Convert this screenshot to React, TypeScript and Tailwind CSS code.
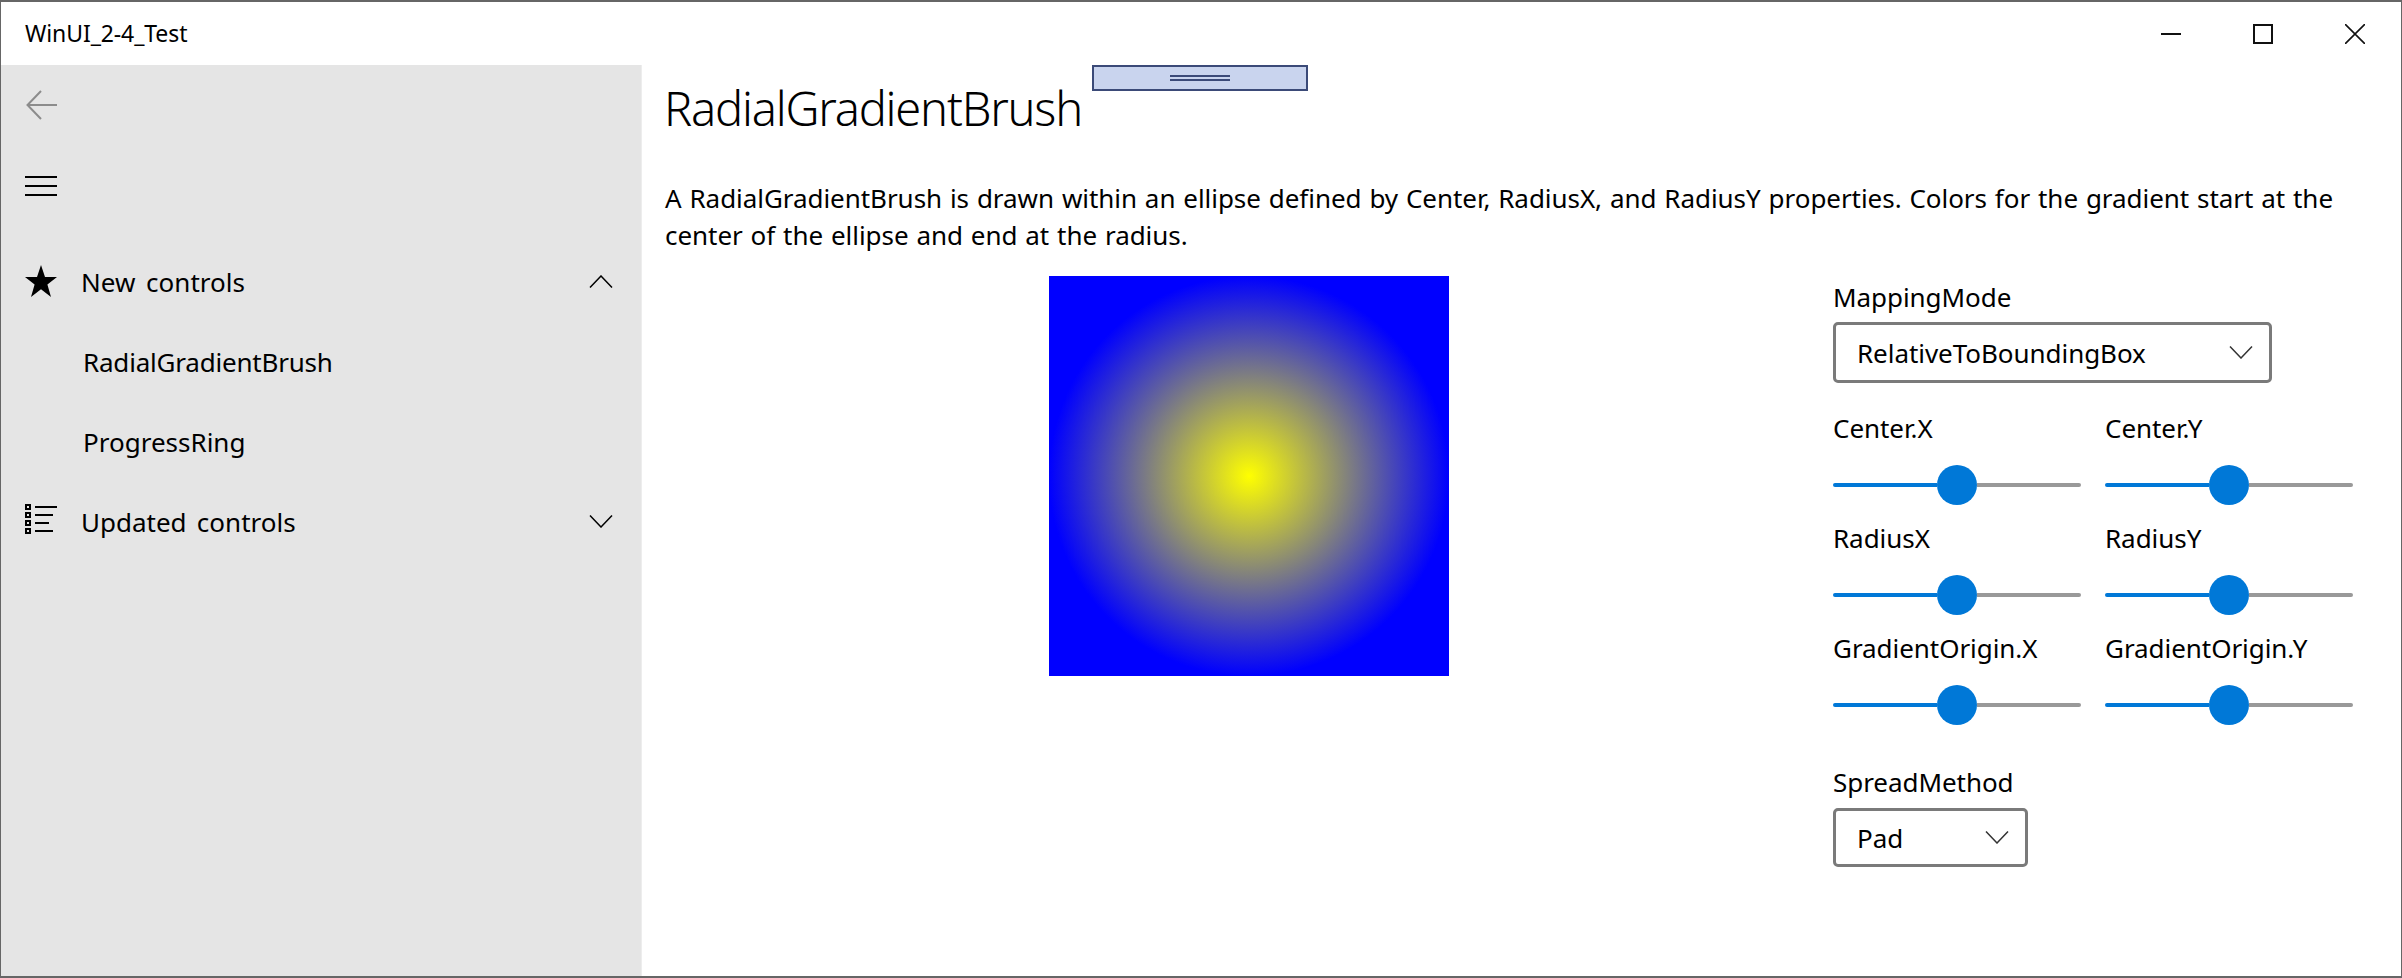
const font = "font-['Noto_Sans',sans-serif]";

function Chevron({ up = false, className = "" }: { up?: boolean; className?: string }) {
  return (
    <svg width="24" height="13" viewBox="0 0 24 13" fill="none" stroke="currentColor" strokeWidth="1.5" className={className}>
      <path d={up ? "M1 12.5 L12 1 L23 12.5" : "M1 .5 L12 12 L23 .5"} />
    </svg>
  );
}

function ComboBox({ value, className }: { value: string; className: string }) {
  return (
    <div className={`flex items-center justify-between rounded-[5px] border-[3px] border-[#7a7a7a] bg-white pl-[21px] pr-[16px] ${className}`}>
      <span className="text-[26px] leading-[36px] tracking-[-0.05px] text-black">{value}</span>
      <Chevron className="text-[#333333]" />
    </div>
  );
}

function SliderField({ label }: { label: string }) {
  return (
    <div className="flex w-[248px] flex-col">
      <div className="whitespace-nowrap text-[26px] leading-[36px] tracking-[-0.05px] text-black">{label}</div>
      <div className="mt-[19px] flex h-[40px] items-center">
        <div className="h-[4px] w-[104px] rounded-l-full bg-[#0078d7]" />
        <div className="h-[40px] w-[40px] rounded-full bg-[#0078d7]" />
        <div className="h-[4px] flex-1 rounded-r-full bg-[#999999]" />
      </div>
    </div>
  );
}

function NavRow({ icon, label, chevron, textClass }: { icon?: React.ReactNode; label: string; chevron?: React.ReactNode; textClass: string }) {
  return (
    <div className="flex h-[80px] items-center pl-[24px] pr-[28px]">
      <div className="flex w-[32px] shrink-0 justify-center">{icon}</div>
      <span className={`flex-1 pt-[2px] text-[26px] text-black ${textClass}`}>{label}</span>
      {chevron}
    </div>
  );
}

export default function App() {
  return (
    <div className={`relative flex h-[978px] w-[2402px] flex-col overflow-hidden border-x border-y-2 border-[#666666] bg-white ${font}`}>
      {/* title bar */}
      <div className="flex h-[63px] shrink-0 items-center pl-[24px]">
        <span className="flex-1 text-[23px] tracking-[-0.1px] text-black">WinUI_2-4_Test</span>
        <div className="flex items-center gap-[72px] pr-[36px]">
          <div className="h-[2px] w-[20px] bg-[#111111]" />
          <div className="h-[20px] w-[20px] border-2 border-[#111111]" />
          <svg width="20" height="20" viewBox="0 0 20 20" stroke="#111111" strokeWidth="1.6">
            <path d="M0 0 L20 20 M20 0 L0 20" />
          </svg>
        </div>
      </div>

      <div className="flex min-h-0 flex-1">
        {/* sidebar */}
        <div className="flex w-[641px] shrink-0 flex-col border-r border-[#ededed] bg-[#e5e5e5]">
          <div className="flex h-[80px] items-center pl-[25px]">
            <svg width="32" height="30" viewBox="0 0 32 30" fill="none" stroke="#8c8c8c" strokeWidth="2">
              <path d="M31 15 H2 M15 1 L1.5 15 L15 29" />
            </svg>
          </div>
          <div className="flex h-[82px] items-center pl-[24px]">
            <svg width="32" height="20" viewBox="0 0 32 20" fill="#000000">
              <rect y="0" width="32" height="2" />
              <rect y="9" width="32" height="2" />
              <rect y="18" width="32" height="2" />
            </svg>
          </div>
          <div className="mt-[14px] flex flex-col">
            <NavRow
              label="New controls"
              textClass="ml-[24px] tracking-[0px] [word-spacing:4px]"
              icon={
                <svg width="32" height="32" viewBox="0 0 32 32" fill="#000000">
                  <polygon points="16,0 20,12 32,12 22.4,19.5 26,32 16,24.2 6,32 9.6,19.5 0,12 12,12" />
                </svg>
              }
              chevron={<Chevron up className="text-black" />}
            />
            <NavRow label="RadialGradientBrush" textClass="ml-[26px] tracking-[-0.2px]" />
            <NavRow label="ProgressRing" textClass="ml-[26px] tracking-[0px]" />
            <NavRow
              label="Updated controls"
              textClass="ml-[24px] tracking-[0px] [word-spacing:3.5px]"
              icon={
                <svg width="32" height="30" viewBox="0 0 32 30" fill="none" stroke="#000000" strokeWidth="2" className="mb-[4px]">
                  <rect x="1" y="1" width="4" height="4" />
                  <rect x="1" y="9" width="4" height="4" />
                  <rect x="1" y="17" width="4" height="4" />
                  <rect x="1" y="25" width="4" height="4" />
                  <path d="M10 3 H32 M10 11 H28 M10 19 H24 M10 27 H28" />
                </svg>
              }
              chevron={<Chevron className="text-black" />}
            />
          </div>
        </div>

        {/* page content */}
        <div className="flex min-w-0 flex-1 flex-col">
          <h1 className="mt-[11px] pl-[22px] text-[47px] font-light leading-[64px] tracking-[-1.2px] text-black">RadialGradientBrush</h1>
          <p className="mt-[40px] pl-[23px] text-[26px] leading-[37px] tracking-[-0.05px] text-black [word-spacing:1.2px]">
            A RadialGradientBrush is drawn within an ellipse defined by Center, RadiusX, and RadiusY properties. Colors for the gradient start at the
            <br />
            center of the ellipse and end at the radius.
          </p>
          <div className="mt-[22px] flex">
            <div className="ml-[407px] h-[400px] w-[400px] shrink-0 bg-[radial-gradient(circle_closest-side,#ffff00,#0000ff)]" />
            <div className="ml-[384px] flex flex-col pt-[3px]">
              <div className="text-[26px] leading-[36px] tracking-[-0.05px] text-black">MappingMode</div>
              <ComboBox value="RelativeToBoundingBox" className="mt-[7px] h-[61px] w-[439px]" />
              <div className="mt-[27px] grid grid-cols-[248px_248px] gap-x-[24px] gap-y-[15px]">
                <SliderField label="Center.X" />
                <SliderField label="Center.Y" />
                <SliderField label="RadiusX" />
                <SliderField label="RadiusY" />
                <SliderField label="GradientOrigin.X" />
                <SliderField label="GradientOrigin.Y" />
              </div>
              <div className="mt-[39px] text-[26px] leading-[36px] tracking-[-0.05px] text-black">SpreadMethod</div>
              <ComboBox value="Pad" className="mt-[8px] h-[59px] w-[195px]" />
            </div>
          </div>
        </div>
      </div>

      {/* floating drag handle */}
      <div className="absolute left-[1091px] top-[63px] flex h-[26px] w-[216px] flex-col items-center justify-center gap-[2px] border-2 border-[#3b4a78] bg-[#c9d4ee]">
        <div className="h-[2px] w-[60px] bg-[#3b4a78]" />
        <div className="h-[2px] w-[60px] bg-[#3b4a78]" />
      </div>
    </div>
  );
}
